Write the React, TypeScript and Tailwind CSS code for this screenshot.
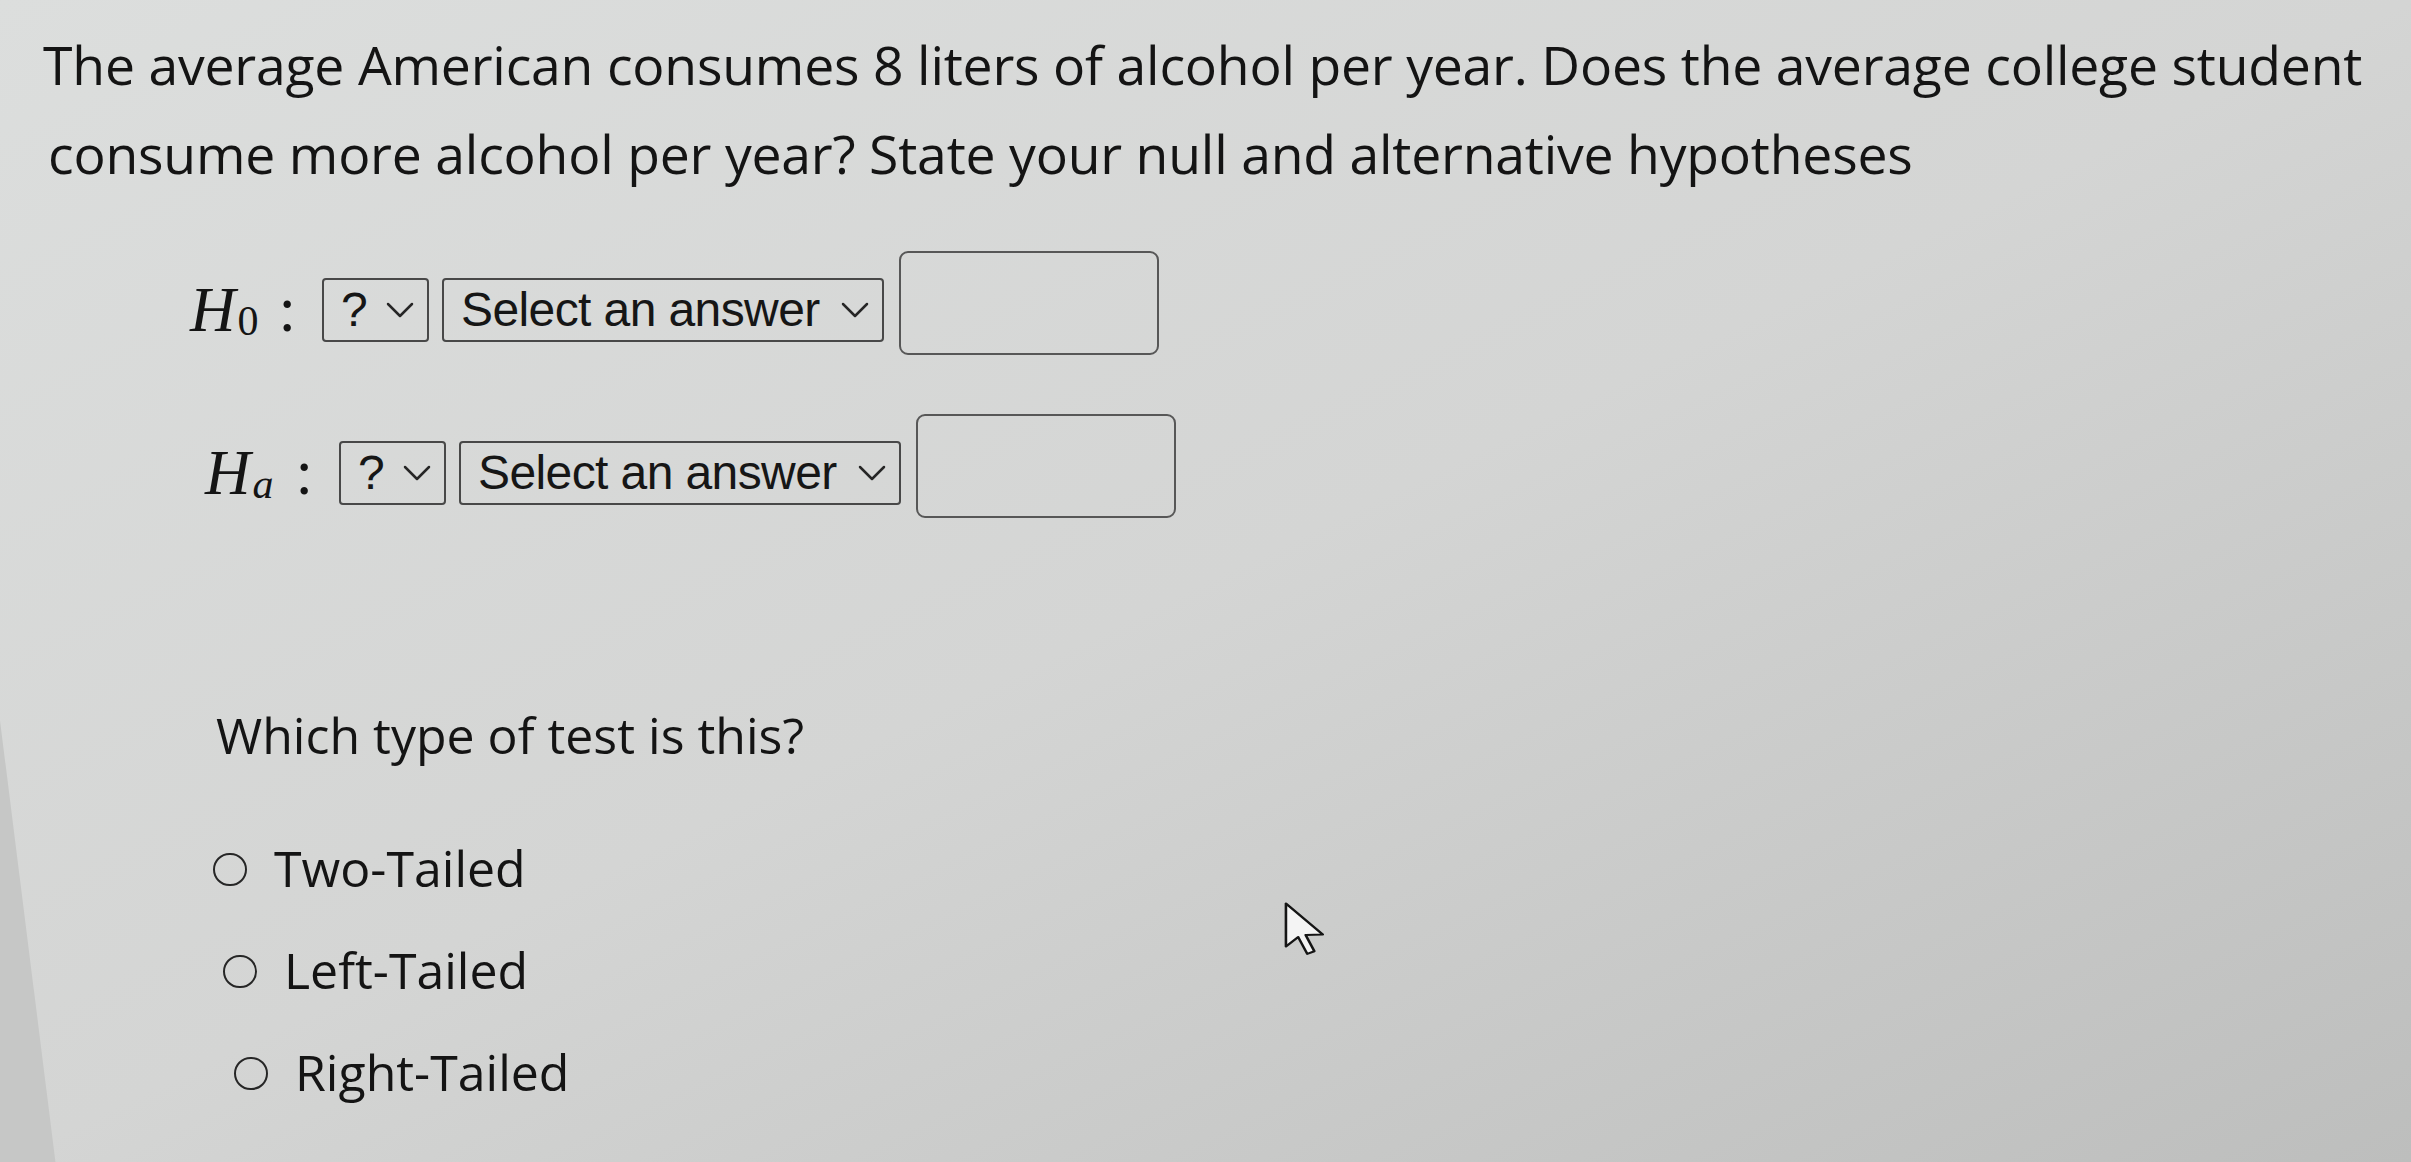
import React from "react";

const Chevron = () => (
    <svg width="28" height="18" viewBox="0 0 28 18" fill="none" className="shrink-0">
        <polyline points="2,3 14,15 26,3" stroke="#262626" strokeWidth="2.5" strokeLinejoin="round" strokeLinecap="round" />
    </svg>
);

const FakeSelect = ({ label, width }: { label: string; width: string }) => (
    <div className={`${width} h-[64px] flex items-center justify-between border-2 border-[#484848] rounded-[4px] pl-[17px] pr-[13px] font-['Liberation_Sans',Arial,sans-serif] text-[48px] leading-none text-[#161616]`}>
        <span className="tracking-[-0.6px]">{label}</span>
        <Chevron />
    </div>
);

const Hypothesis = ({ sub, italicSub, rowClass, colonGap }: { sub: string; italicSub: boolean; rowClass: string; colonGap: string }) => (
    <div className={`flex items-center ${rowClass}`}>
        <div className="h-[64px] flex items-center font-['Liberation_Serif','Times_New_Roman',serif] text-[63px] leading-[64px] text-[#141414]">
            <span className="italic">H</span>
            <sub className={`text-[42px] ml-[2px] ${italicSub ? "italic" : "not-italic"}`}>{sub}</sub>
            <span className={colonGap}>:</span>
        </div>
        <div className="ml-[26px]">
            <FakeSelect label="?" width="w-[107px]" />
        </div>
        <div className="ml-[13px]">
            <FakeSelect label="Select an answer" width="w-[442px]" />
        </div>
        <div className="ml-[15px] mb-[14px] w-[260px] h-[104px] border-2 border-[#575757] rounded-[9px]" />
    </div>
);

const Radio = ({ label, rowClass }: { label: string; rowClass: string }) => (
    <div className={`flex items-center h-[102px] ${rowClass}`}>
        <span className="w-[34px] h-[33px] rounded-full border-[2.5px] border-[#262626] shrink-0 mt-[2px]" />
        <span className="ml-[27px] text-[50px] leading-[102px]">{label}</span>
    </div>
);

export default function App() {
    return (
        <div className="relative w-full h-[1162px] overflow-hidden bg-linear-to-br from-[#dcdedd] via-[#d4d5d4] to-[#bdbebd] font-['Open_Sans',sans-serif] text-[#141414]">
            {/* screen edge in the lower left */}
            <div className="absolute inset-0 bg-[#c6c7c6] [clip-path:polygon(0_62%,2.3%_100%,0_100%)]" />

            <div className="relative pt-[20px]">
                <p className="text-[53.5px] leading-[89px] tracking-[-0.2px]">
                    <span className="block ml-[43px]">The average American consumes 8 liters of alcohol per year. Does the average college student</span>
                    <span className="block ml-[48px]">consume more alcohol per year? State your null and alternative hypotheses</span>
                </p>

                <div className="mt-[53px]">
                    <Hypothesis sub="0" italicSub={false} rowClass="ml-[190px]" colonGap="ml-[20px]" />
                </div>
                <div className="mt-[45px]">
                    <Hypothesis sub="a" italicSub={true} rowClass="ml-[205px]" colonGap="ml-[22px]" />
                </div>

                <p className="mt-[169px] ml-[216px] text-[50px] leading-[68px]">Which type of test is this?</p>

                <div className="mt-[48px] flex flex-col">
                    <Radio label="Two-Tailed" rowClass="ml-[213px]" />
                    <Radio label="Left-Tailed" rowClass="ml-[223px]" />
                    <Radio label="Right-Tailed" rowClass="ml-[234px]" />
                </div>
            </div>

            {/* mouse pointer */}
            <svg className="absolute left-[1284px] top-[902px]" width="42" height="55" viewBox="0 0 13 21" preserveAspectRatio="none">
                <path d="M0.6 0.6 L0.6 17 L4.4 13.4 L7.2 19.8 L9.4 18.8 L6.7 12.6 L12 12.4 Z" fill="#f4f4f4" stroke="#151515" strokeWidth="0.8" strokeLinejoin="round" />
            </svg>
        </div>
    );
}
